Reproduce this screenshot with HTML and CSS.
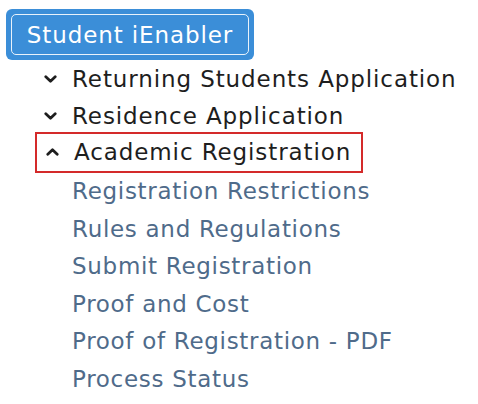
FILE: index.html
```html
<!DOCTYPE html>
<html>
<head>
<meta charset="utf-8">
<link rel="stylesheet" href="styles.css">
</head>
<body>
<div class="page">
  <div class="brand"><span class="brand-inner">Student iEnabler</span></div>
  <ul class="menu">
    <li class="menu-item">
      <span class="chev"><svg width="13" height="8" viewBox="0 0 13 8"><path d="M1.8 1.8 L6.5 6.2 L11.2 1.8" fill="none" stroke="#1e1e1e" stroke-width="2.8" stroke-linecap="round" stroke-linejoin="round"/></svg></span>
      <span class="label">Returning Students Application</span>
    </li>
    <li class="menu-item">
      <span class="chev"><svg width="13" height="8" viewBox="0 0 13 8"><path d="M1.8 1.8 L6.5 6.2 L11.2 1.8" fill="none" stroke="#1e1e1e" stroke-width="2.8" stroke-linecap="round" stroke-linejoin="round"/></svg></span>
      <span class="label">Residence Application</span>
    </li>
    <li class="menu-item open">
      <div class="open-head">
        <span class="chev"><svg width="13" height="8" viewBox="0 0 13 8"><path d="M1.8 6.2 L6.5 1.8 L11.2 6.2" fill="none" stroke="#1e1e1e" stroke-width="2.8" stroke-linecap="round" stroke-linejoin="round"/></svg></span>
        <span class="label">Academic Registration</span>
      </div>
      <ul class="submenu">
        <li>Registration Restrictions</li>
        <li>Rules and Regulations</li>
        <li>Submit Registration</li>
        <li>Proof and Cost</li>
        <li>Proof of Registration - PDF</li>
        <li>Process Status</li>
      </ul>
    </li>
  </ul>
</div>
</body>
</html>
```
FILE: styles.css
```css
html, body {
  margin: 0;
  padding: 0;
  background: #fff;
}
.page {
  font-family: "DejaVu Sans", "Liberation Sans", sans-serif;
  padding: 9px 0 0 6px;
}
.brand {
  display: flex;
  width: 248px;
  height: 51px;
  box-sizing: border-box;
  background: #3b8ed8;
  border-radius: 6px;
  padding: 5px;
}
.brand-inner {
  flex: 1;
  display: flex;
  align-items: center;
  justify-content: center;
  box-sizing: border-box;
  border: 1.5px solid #e8f2fb;
  border-radius: 5px;
  color: #fff;
  font-size: 23px;
  letter-spacing: 0.9px;
}
.menu {
  list-style: none;
  margin: 0;
  padding: 0 0 0 32px;
}
.menu-item {
  display: flex;
  align-items: center;
  height: 37.5px;
  font-size: 23px;
  letter-spacing: 0.9px;
  color: #1e1e1e;
}
.menu-item.open {
  display: block;
  height: auto;
}
.open-head {
  display: inline-flex;
  align-items: center;
  height: 41px;
  box-sizing: border-box;
  border: 2px solid #d42a2a;
  margin: -4px 0 0.5px -3px;
  padding: 0 10px 0 3px;
}
.chev {
  display: inline-flex;
  width: 13px;
  margin: 0 15px 0 6px;
}
.submenu {
  list-style: none;
  margin: 0;
  padding: 0 0 0 34px;
}
.submenu li {
  height: 37.5px;
  line-height: 37.5px;
  font-size: 23px;
  letter-spacing: 0.7px;
  color: #4f6b8a;
}
```
